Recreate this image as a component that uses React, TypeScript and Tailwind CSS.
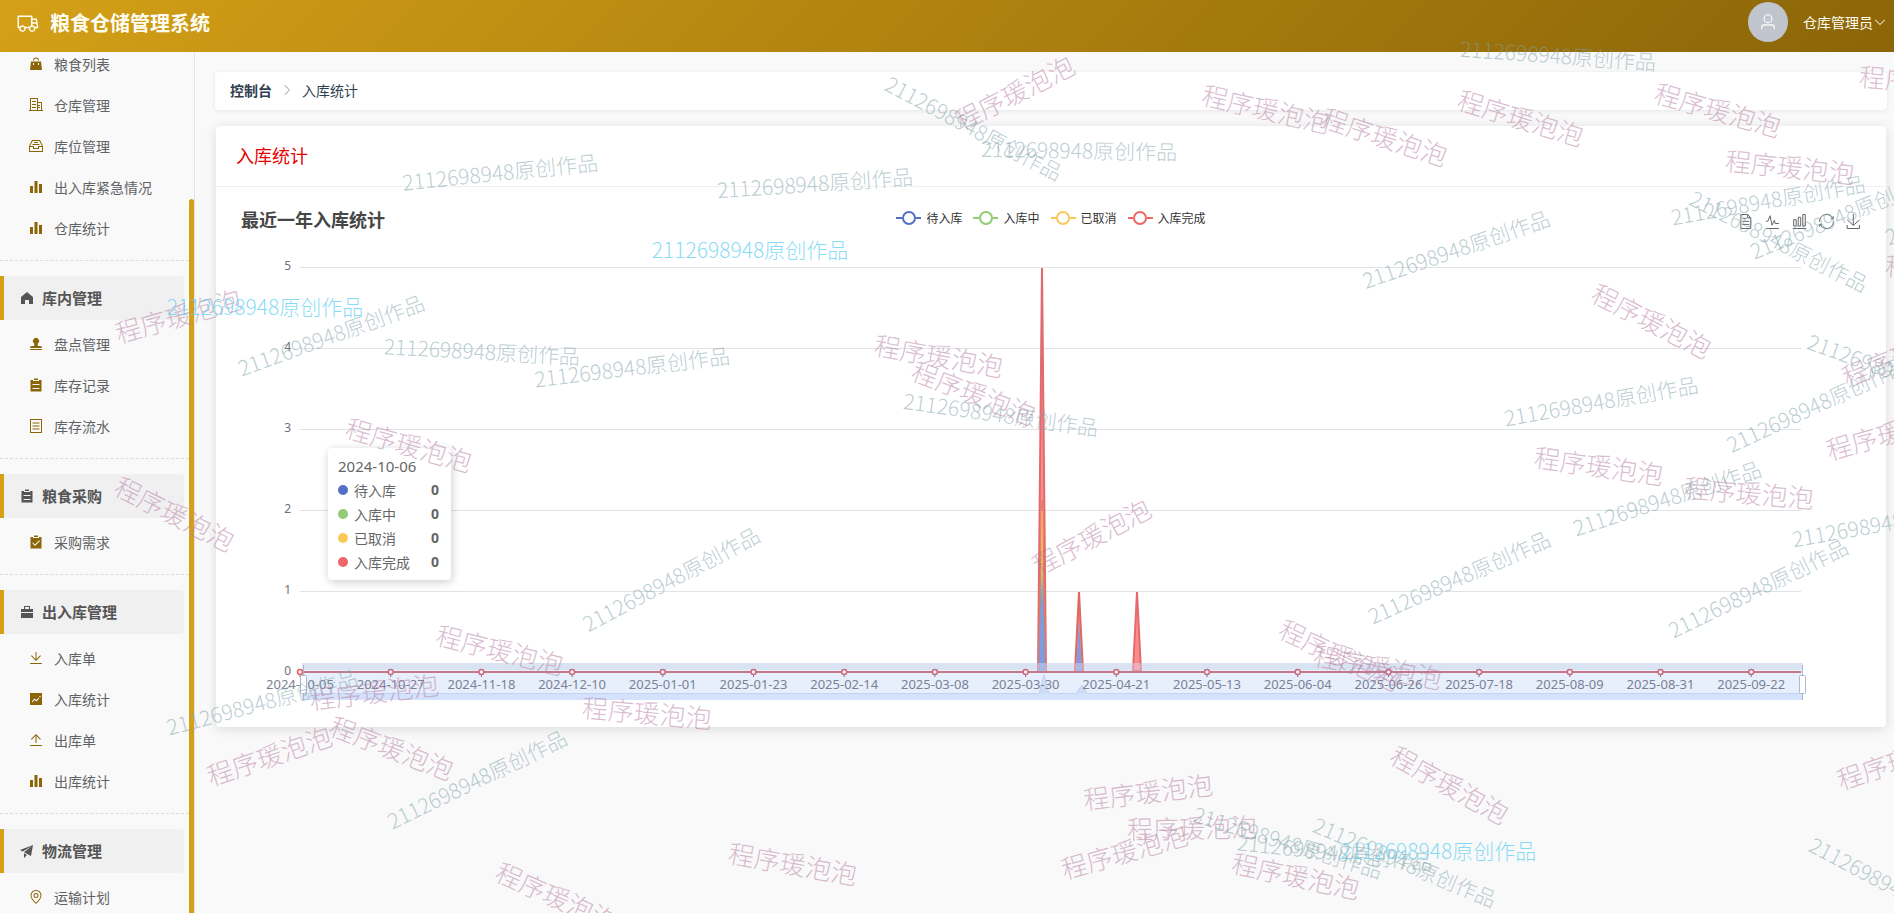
import React from "react";

const icons = {
  van: "M128.896 736H96a32 32 0 0 1-32-32V224a32 32 0 0 1 32-32h576a32 32 0 0 1 32 32v96h164.544a32 32 0 0 1 31.616 27.136l54.144 352A32 32 0 0 1 922.688 736h-91.52a144 144 0 1 1-286.272 0H415.104a144 144 0 1 1-286.272 0zm23.36-64a143.872 143.872 0 0 1 239.488 0H568.32c17.088-25.6 42.24-45.376 71.744-55.808V256H128v416zm655.488 0h77.632l-19.648-128H704v64.896A144 144 0 0 1 807.744 672m48.128-192-14.72-96H704v96h151.872M688 832a80 80 0 1 0 0-160 80 80 0 0 0 0 160m-416 0a80 80 0 1 0 0-160 80 80 0 0 0 0 160",
  user: "M512 512a192 192 0 1 0 0-384 192 192 0 0 0 0 384m0 64a256 256 0 1 1 0-512 256 256 0 0 1 0 512m320 320v-96a96 96 0 0 0-96-96H288a96 96 0 0 0-96 96v96a32 32 0 1 1-64 0v-96a160 160 0 0 1 160-160h448a160 160 0 0 1 160 160v96a32 32 0 1 1-64 0",
  arrowDown: "M831.872 340.864 512 652.672 192.128 340.864a30.592 30.592 0 0 0-42.752 0 29.12 29.12 0 0 0 0 41.6L489.664 714.24a32 32 0 0 0 44.672 0l340.288-331.712a29.12 29.12 0 0 0 0-41.728 30.592 30.592 0 0 0-42.752 0z",
  arrowRight: "M340.864 149.312a30.592 30.592 0 0 0 0 42.752L652.736 512 340.864 831.872a30.592 30.592 0 0 0 0 42.752 29.12 29.12 0 0 0 41.728 0L714.24 534.336a32 32 0 0 0 0-44.672L382.592 149.376a29.12 29.12 0 0 0-41.728 0z",
  goods: "M192 352h640l64 544H128zm128 224h64V448h-64zm320 0h64V448h-64zM384 288h-64a192 192 0 1 1 384 0h-64a128 128 0 1 0-256 0",
  office: "M192 128v704h384V128zm-32-64h448a32 32 0 0 1 32 32v768a32 32 0 0 1-32 32H160a32 32 0 0 1-32-32V96a32 32 0 0 1 32-32M256 256h256v64H256zm0 192h256v64H256zm0 192h256v64H256zm384-128h128v64H640zm0 128h128v64H640zM64 832h896v64H64zM640 384v448h192V384zm-32-64h256a32 32 0 0 1 32 32v512a32 32 0 0 1-32 32H608a32 32 0 0 1-32-32V352a32 32 0 0 1 32-32",
  box: "M288 384h448v64H288zm96-128h256v64H384zM131.456 512H384v128h256V512h252.544L721.856 192H302.144zM896 576H704v128H320V576H128v256h768zM275.776 128h472.448a32 32 0 0 1 28.608 17.664l179.84 359.552A32 32 0 0 1 960 519.552V864a32 32 0 0 1-32 32H96a32 32 0 0 1-32-32V519.552a32 32 0 0 1 3.392-14.336l179.776-359.552A32 32 0 0 1 275.776 128",
  histogram: "M416 896V128h192v768zm-288 0V448h192v448zm576 0V320h192v576z",
  home: "M512 128 128 447.936V896h255.936V640H640v256h255.936V447.936z",
  stamp: "M624 475.968V640h144a128 128 0 0 1 128 128H128a128 128 0 0 1 128-128h144V475.968a192 192 0 1 1 224 0M128 896v-64h768v64z",
  list: "M704 192h160v736H160V192h160v64h384zM288 512h448v-64H288zm0 256h448v-64H288zm96-576V96h256v96z",
  sheet: "M192 128v768h640V128zm-32-64h704a32 32 0 0 1 32 32v832a32 32 0 0 1-32 32H160a32 32 0 0 1-32-32V96a32 32 0 0 1 32-32m128 416h448v64H288zm0-192h448v64H288zm0 384h448v64H288z",
  checked: "M704 192h160v736H160V192h160.064v64H704zM311.616 537.28l-45.312 45.248L447.36 763.52l316.8-316.8-45.312-45.184L447.36 673.024zM384 192V96h256v96z",
  briefcase: "M320 320V128h384v192h192v192H128V320zM128 576h768v320H128zm256-256h256.064V192H384z",
  download: "M160 832h704a32 32 0 1 1 0 64H160a32 32 0 1 1 0-64m384-253.696 236.288-236.352 45.248 45.248L508.8 704 192 387.2l45.248-45.248L480 584.704V128h64z",
  upload: "M160 832h704a32 32 0 1 1 0 64H160a32 32 0 1 1 0-64m384-578.304V704h-64V247.296L237.248 490.048 192 444.8 508.8 128l316.8 316.8-45.312 45.248z",
  trend: "M128 896V128h768v768zm291.712-327.296 128 102.4 180.16-201.792-47.744-42.624-139.84 156.608-128-102.4-180.16 201.792 47.744 42.624 139.84-156.608zM816 352a48 48 0 1 0-96 0 48 48 0 0 0 96 0",
  promotion: "m64 448 832-320-128 704-446.08-243.328L832 192 242.816 545.472zm256 512V657.024L512 768z",
  location: "M800 416a288 288 0 1 0-576 0c0 118.144 94.528 272.128 288 456.576C705.472 688.128 800 534.144 800 416M512 960C277.312 746.688 160 565.312 160 416a352 352 0 0 1 704 0c0 149.312-117.312 330.688-352 544M512 512a96 96 0 1 0 0-192 96 96 0 0 0 0 192m0 64a160 160 0 1 1 0-320 160 160 0 0 1 0 320",
};

type IconName = keyof typeof icons;

function Icon({ name, className }: { name: IconName; className: string }) {
  return (
    <svg viewBox="0 0 1024 1024" fill="currentColor" aria-hidden="true" className={className}>
      <path d={icons[name]} />
    </svg>
  );
}

type Item = { icon: IconName; label: string };
type Group = { title?: Item; items: Item[] };

const groups: Group[] = [
  {
    items: [
      { icon: "goods", label: "粮食列表" },
      { icon: "office", label: "仓库管理" },
      { icon: "box", label: "库位管理" },
      { icon: "histogram", label: "出入库紧急情况" },
      { icon: "histogram", label: "仓库统计" },
    ],
  },
  {
    title: { icon: "home", label: "库内管理" },
    items: [
      { icon: "stamp", label: "盘点管理" },
      { icon: "list", label: "库存记录" },
      { icon: "sheet", label: "库存流水" },
    ],
  },
  {
    title: { icon: "list", label: "粮食采购" },
    items: [{ icon: "checked", label: "采购需求" }],
  },
  {
    title: { icon: "briefcase", label: "出入库管理" },
    items: [
      { icon: "download", label: "入库单" },
      { icon: "trend", label: "入库统计" },
      { icon: "upload", label: "出库单" },
      { icon: "histogram", label: "出库统计" },
    ],
  },
  {
    title: { icon: "promotion", label: "物流管理" },
    items: [{ icon: "location", label: "运输计划" }],
  },
];

function Header() {
  return (
    <header className="relative z-10 flex h-[52px] shrink-0 items-center justify-between bg-linear-135 from-[#d4a017] to-[#8b6508] pr-[7px] pl-4 text-[#fffdf2]">
      <div className="flex items-center gap-2.5 pb-1.5">
        <Icon name="van" className="size-6" />
        <h1 className="text-xl leading-7 font-bold">粮食仓储管理系统</h1>
      </div>
      <button type="button" className="flex items-center pb-2 text-sm">
        <span className="mr-[15px] flex size-10 items-center justify-center rounded-full bg-[#c0c4cc] text-white">
          <Icon name="user" className="size-[18px]" />
        </span>
        仓库管理员
        <Icon name="arrowDown" className="size-3.5" />
      </button>
    </header>
  );
}

function Sidebar() {
  return (
    <aside className="relative w-[195px] shrink-0 overflow-hidden border-r border-[#e4e4e4] bg-[#f9f9f9]">
      <nav aria-label="主菜单" className="-mt-2">
        {groups.map((group, i) => (
          <section key={i} className={i < groups.length - 1 ? "mb-[15px] border-b border-dashed border-[#dcdcdc] pb-[11px]" : ""}>
            {group.title && (
              <h2 className="mr-2.5 mb-1 flex h-11 items-center gap-[7px] rounded-r border-l-4 border-[#d4a017] bg-[#f0f0f0] pl-[15px] text-[15px] font-bold text-[#555]">
                <Icon name={group.title.icon} className="size-4" />
                {group.title.label}
              </h2>
            )}
            <ul>
              {group.items.map((item) => (
                <li key={item.label}>
                  <a href="#" className="flex h-[41px] items-center gap-2.5 pb-0.5 pl-7 text-sm text-[#606266]">
                    <Icon name={item.icon} className="size-4 text-[#8b6508]" />
                    {item.label}
                  </a>
                </li>
              ))}
            </ul>
          </section>
        ))}
      </nav>
      <div className="absolute top-[147px] right-0 bottom-0 w-[5px] rounded-t-full bg-[#d4a017]" />
    </aside>
  );
}

const series = [
  { name: "待入库", value: 0, line: "border-[#5470c6]", bar: "bg-[#5470c6]" },
  { name: "入库中", value: 0, line: "border-[#91cc75]", bar: "bg-[#91cc75]" },
  { name: "已取消", value: 0, line: "border-[#fac858]", bar: "bg-[#fac858]" },
  { name: "入库完成", value: 0, line: "border-[#ee6666]", bar: "bg-[#ee6666]" },
];

const tools = [
  { label: "数据视图", d: "M17.5,17.3H33M45.4,29.5h-28M11.5,2v56H51V14.8L38.4,2H11.5zM38.4,2.2v12.7H51M45.4,41.7h-28" },
  { label: "切换为折线图", d: "M4.1,28.9h7.1l9.3-22l7.4,38l9.7-19.7l3,12.8h14.9M4.1,58h51.4" },
  { label: "切换为柱状图", d: "M6.7,22.9h10V48h-10V22.9zM24.9,13h10v35h-10V13zM43.2,2h10v46h-10V2zM3.1,58h53.7" },
  { label: "还原", d: "M47,18.9h9.8V8.7M56.3,20.1C52.1,9,40.5,0.6,26.8,2.1C12.6,3.7,1.6,16.2,2.1,30.6M13,41.1H3.1v10.2M3.7,39.9c4.2,11.1,15.8,19.5,29.5,18c14.2-1.6,25.2-14.1,24.7-28.5" },
  { label: "保存为图片", d: "M4.7,22.9L29.3,45.5L54.7,23.4M4.6,43.6L4.6,58L53.8,58L53.8,43.6M29.2,45.1L29.2,0" },
];

const dates = [
  "2024-10-05", "2024-10-27", "2024-11-18", "2024-12-10", "2025-01-01", "2025-01-23",
  "2025-02-14", "2025-03-08", "2025-03-30", "2025-04-21", "2025-05-13", "2025-06-04",
  "2025-06-26", "2025-07-18", "2025-08-09", "2025-08-31", "2025-09-22",
];

const axisLeft = 84;
const axisRight = 1585;
const axisY = 432;
const rowStep = 81;
const tickX = (i: number) => axisLeft + i * 90.7;

function Chart() {
  return (
    <svg viewBox="0 0 1670 487" className="block h-auto w-full" role="img" aria-label="最近一年入库统计图表">
      <defs>
        <linearGradient id="mixed" x1="0" y1="0" x2="0" y2="1">
          <stop offset="0" stopColor="#fac858" />
          <stop offset="0.35" stopColor="#e0b060" />
          <stop offset="0.55" stopColor="#9b9a86" />
          <stop offset="0.75" stopColor="#8496c8" />
          <stop offset="1" stopColor="#809be0" />
        </linearGradient>
      </defs>
      {[5, 4, 3, 2, 1].map((v) => (
        <line key={v} x1={axisLeft} x2={axisRight} y1={axisY - v * rowStep + 0.5} y2={axisY - v * rowStep + 0.5} stroke="#e0e2e6" />
      ))}
      <g className="font-['Noto_Sans'] text-[12px]" fill="#6e7079">
        {[5, 4, 3, 2, 1, 0].map((v) => (
          <text key={v} x="75" y={axisY - v * rowStep + 3} textAnchor="end">
            {v}
          </text>
        ))}
      </g>
      <rect x="86" y="423" width="1501" height="37" fill="#e4edfd" opacity="0.9" />
      <rect x="86" y="423" width="1501" height="7" fill="#d2dbea" opacity="0.6" />
      <rect x="86" y="453" width="1501" height="7" fill="#d4e2fc" />
      <path d="M86 453.500H823L828 435 833 453.500H860L866 445 871 453.500H1586" fill="#cfdcf8" stroke="#c4d3f4" />
      <g strokeWidth="2" strokeLinejoin="bevel">
        <path d="M822 431 826 28 830 431Z" fill="#ff8c8c" stroke="#e06a6e" />
        <path d="M822 431 826 260 830 431Z" fill="url(#mixed)" stroke="#e07a60" strokeWidth="1" />
        <path d="M825 380V271h2V380Z" fill="#fac858" opacity="0.6" stroke="none" />
        <path d="M823 431 826 330 829 431Z" fill="#829be0" />
        <path d="M859 431 863 352 867 431Z" fill="#ff8c8c" stroke="#e0695f" />
        <path d="M860 431 863 380 866 431Z" fill="#829be0" />
        <path d="M917 431 921 352 925 431Z" fill="#ff8c8c" stroke="#e46a6e" />
      </g>
      <rect x="815" y="423" width="120" height="9" fill="#d8e3fa" opacity="0.4" />
      <line x1={axisLeft} x2={axisRight} y1={axisY} y2={axisY} stroke="#c4788a" strokeWidth="2" />
      {dates.map((d, i) => (
        <g key={d}>
          <path d={`M${tickX(i)} ${axisY}v5`} stroke="#7d7186" />
          <circle cx={tickX(i)} cy={axisY} r="2.500" fill="#fdf0f2" stroke={i === 0 ? "#e4605f" : "#c86a80"} strokeWidth="1.500" />
        </g>
      ))}
      <g className="font-['Noto_Sans'] text-[13px]" fill="#7a8193" textAnchor="middle">
        {dates.map((d, i) => (
          <text key={d} x={tickX(i)} y="449">
            {d}
          </text>
        ))}
      </g>
      <g fill="#fff" stroke="#acb8d1">
        <path d="M87.500 425V460M1586.500 425V460" />
        <rect x="84.500" y="435.500" width="6" height="18" rx="1" />
        <rect x="1583.500" y="435.500" width="6" height="18" rx="1" />
      </g>
    </svg>
  );
}

function Tooltip() {
  return (
    <div
      role="tooltip"
      className="absolute top-[322px] left-28 w-[123px] rounded bg-white px-2.5 pt-1.5 pb-1.5 text-sm leading-6 text-[#666] shadow-[1px_2px_10px_rgba(0,0,0,0.2)]"
    >
      <p className="font-['Noto_Sans'] text-[15px]">2024-10-06</p>
      {series.map((s) => (
        <p key={s.name} className="flex items-center">
          <span className={`mr-1.5 size-2.5 rounded-full ${s.bar}`} />
          {s.name}
          <b className="ml-auto pr-0.5 font-['Noto_Sans']">{s.value}</b>
        </p>
      ))}
    </div>
  );
}

type Mark = [x: number, y: number, angle: number];

const codeMarks: Mark[] = [
  [500, 172, -6], [815, 183, -4], [974, 128, 28], [1079, 150, 1], [1558, 55, 4], [1456, 249, -19],
  [1768, 200, -10], [1779, 241, 27], [1842, 215, -22], [1978, 204, -20], [331, 335, -20], [482, 351, 3],
  [632, 367, -7], [1001, 414, 8], [671, 579, -28], [1601, 401, -10], [1901, 374, 20], [1817, 404, -25],
  [1667, 498, -18], [1459, 577, -24], [1889, 522, -10], [1758, 588, -26], [262, 702, -15], [477, 779, -26],
  [1288, 842, 17], [1335, 852, 6], [1405, 862, 23], [1898, 889, 28],
];

const brightMarks: Mark[] = [[265, 306, 0], [750, 249, 0], [1438, 850, 0]];

const nameMarks: Mark[] = [
  [1014, 92, -27], [1266, 108, 13], [1385, 136, 18], [1521, 117, 17], [1718, 109, 16], [1924, 81, 5],
  [1790, 166, 6], [1950, 270, 5], [1652, 320, 27], [1903, 353, -22], [1599, 465, 8], [1749, 492, 5],
  [1889, 432, -16], [178, 315, -16], [175, 513, 27], [409, 444, 16], [939, 355, 10], [974, 392, 21],
  [1091, 536, -28], [1340, 654, 25], [1378, 666, 11], [500, 649, 14], [374, 691, -7], [269, 755, -19],
  [392, 747, 21], [647, 712, 5], [793, 863, 10], [557, 896, 24], [1148, 791, -7], [1192, 827, -1],
  [1124, 851, -16], [1296, 875, 12], [1450, 784, 29], [1899, 759, -19],
];

function Marks({ text, marks, className }: { text: string; marks: Mark[]; className: string }) {
  return (
    <>
      {marks.map(([x, y, angle]) => (
        <span
          key={`${x}-${y}`}
          className={`absolute leading-none font-light whitespace-nowrap ${className}`}
          style={{ left: x, top: y, transform: `translate(-50%, -50%) rotate(${angle}deg)` }}
        >
          {text}
        </span>
      ))}
    </>
  );
}

function Watermarks() {
  return (
    <div aria-hidden="true" className="pointer-events-none absolute inset-0 z-20 overflow-hidden">
      <Marks text="程序瑗泡泡" marks={nameMarks} className="text-[26px] text-[#b47aa0]/50" />
      <Marks text="2112698948原创作品" marks={codeMarks} className="text-[21px] text-[#7fa3a9]/55" />
      <Marks text="2112698948原创作品" marks={brightMarks} className="text-[21px] text-[#5fd0f2]/75" />
    </div>
  );
}

export default function App() {
  return (
    <div className="relative flex h-screen flex-col overflow-hidden bg-[#f9f9f9] font-['Noto_Sans_CJK_SC',sans-serif]">
      <Header />
      <div className="flex min-h-0 flex-1">
        <Sidebar />
        <main className="min-w-0 flex-1 pt-5 pr-[7px] pl-5">
          <nav aria-label="面包屑" className="mb-4 flex h-[38px] items-center rounded bg-white px-[15px] pb-0.5 text-sm text-[#303f50] shadow-[0_1px_4px_rgba(0,0,0,0.08)]">
            <a href="#" className="font-bold">
              控制台
            </a>
            <Icon name="arrowRight" className="mx-2 size-3.5 text-[#a8abb2]" />
            <span>入库统计</span>
          </nav>
          <section className="relative mx-px rounded bg-white shadow-[0_2px_12px_rgba(0,0,0,0.12)]">
            <h2 className="flex h-[61px] items-center border-b border-[#f0f0f0] px-5 pb-0.5 text-lg text-[#e60000]">入库统计</h2>
            <div className="grid h-[53px] grid-cols-[1fr_auto_1fr] items-center pt-2.5 pr-[25px] pl-[25px]">
              <h3 className="text-lg font-bold text-[#464646]">最近一年入库统计</h3>
              <ul className="flex gap-[11px] pb-0.5 text-xs text-[#333]">
                {series.map((s) => (
                  <li key={s.name} className="flex items-center gap-[5px]">
                    <span className="flex h-3.5 w-[25px] items-center">
                      <i className={`h-0.5 flex-1 ${s.bar}`} />
                      <i className={`size-3.5 rounded-full border-2 ${s.line}`} />
                      <i className={`h-0.5 flex-1 ${s.bar}`} />
                    </span>
                    {s.name}
                  </li>
                ))}
              </ul>
              <div className="flex justify-end gap-3 pt-1.5">
                {tools.map((t) => (
                  <button key={t.label} type="button" aria-label={t.label}>
                    <svg viewBox="0 0 60 60" className="size-[15px] overflow-visible" fill="none" stroke="#666" strokeWidth="4">
                      <path d={t.d} />
                    </svg>
                  </button>
                ))}
              </div>
            </div>
            <Chart />
            <Tooltip />
          </section>
        </main>
      </div>
      <Watermarks />
    </div>
  );
}
